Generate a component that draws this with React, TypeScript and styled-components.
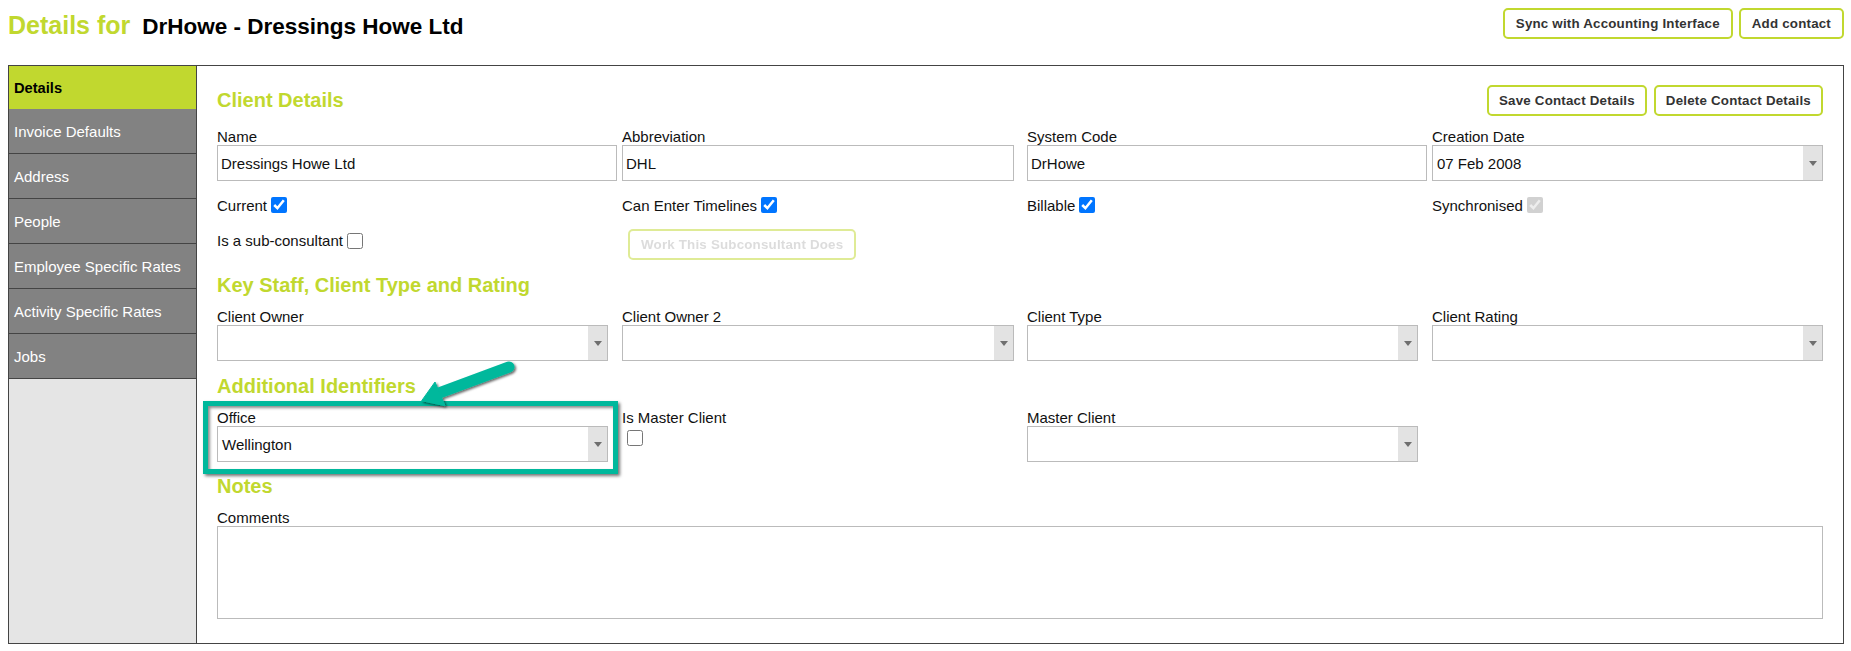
import React from "react";
import styled, { createGlobalStyle } from "styled-components";

const GlobalStyle = createGlobalStyle`
  html, body {
    margin: 0;
    padding: 0;
    background: #fff;
    font-family: "Liberation Sans", Arial, sans-serif;
    color: #111;
  }
`;

const LIME = "#c1d82f";
const TEAL = "#00b89c";

const Page = styled.div`
  width: 1851px;
  height: 651px;
  overflow: hidden;
  box-sizing: border-box;
  padding: 8px 7px 0 8px;
`;

const TopBar = styled.div`
  display: flex;
  justify-content: space-between;
  align-items: center;
  height: 31px;
  margin-bottom: 26px;
`;

const PageTitle = styled.h1`
  margin: 0;
  padding-top: 3px;
  font-size: 25px;
  font-weight: bold;
  color: ${LIME};
  display: flex;
  align-items: baseline;
  gap: 12px;

  span {
    color: #000;
    font-size: 22.5px;
  }
`;

const ButtonRow = styled.div<{ $gap: number }>`
  display: flex;
  gap: ${(p) => p.$gap}px;
`;

const ActionButton = styled.button<{ $disabled?: boolean; $compact?: boolean }>`
  height: 31px;
  box-sizing: border-box;
  padding: 0 ${(p) => (p.$compact ? 10 : 11)}px;
  background: #fff;
  border: 2px solid ${LIME};
  border-radius: 5px;
  font-family: "Liberation Sans", Arial, sans-serif;
  font-size: 13.33px;
  font-weight: bold;
  letter-spacing: 0.2px;
  color: #333;
  opacity: ${(p) => (p.$disabled ? 0.5 : 1)};
  ${(p) => p.$disabled && "color: #bbb;"}
`;

const Panel = styled.div`
  display: flex;
  box-sizing: border-box;
  height: 579px;
  border: 1px solid #444;
`;

const Sidebar = styled.nav`
  width: 187px;
  flex: none;
  background: #e5e5e5;
  border-right: 1px solid #444;
`;

const Tab = styled.div<{ $active?: boolean }>`
  box-sizing: border-box;
  height: ${(p) => (p.$active ? 43 : 45)}px;
  padding-left: 5px;
  display: flex;
  align-items: center;
  font-size: ${(p) => (p.$active ? 14.67 : 15)}px;
  color: ${(p) => (p.$active ? "#000" : "#fff")};
  font-weight: ${(p) => (p.$active ? "bold" : "normal")};
  background: ${(p) => (p.$active ? LIME : "#828282")};
  border-bottom: ${(p) => (p.$active ? "none" : "1px solid #444")};
`;

const Main = styled.main`
  flex: 1;
  min-width: 0;
  box-sizing: border-box;
  padding: 19px 20px 0;
`;

const HeadingRow = styled.div`
  display: flex;
  justify-content: space-between;
  align-items: center;
  height: 31px;
`;

const SectionTitle = styled.h2<{ $top?: number }>`
  margin: ${(p) => p.$top ?? 0}px 0 0;
  font-size: 20px;
  line-height: 23px;
  font-weight: bold;
  color: ${LIME};
`;

const FieldGrid = styled.div<{ $top?: number }>`
  display: grid;
  grid-template-columns: 405px 405px 405px 391px;
  margin-top: ${(p) => p.$top ?? 0}px;
`;

const Field = styled.div`
  position: relative;
  min-width: 0;
`;

const Label = styled.label`
  display: block;
  font-size: 15px;
  line-height: 16px;
`;

const NotesLabel = styled(Label)`
  margin-top: 12px;
`;

const TextBox = styled.div<{ $width: number }>`
  box-sizing: border-box;
  width: ${(p) => p.$width}px;
  height: 36px;
  border: 1px solid #bbb;
  padding-left: 3px;
  display: flex;
  align-items: center;
  font-size: 15px;
`;

const SelectBox = styled.div<{ $width?: number }>`
  box-sizing: border-box;
  width: ${(p) => p.$width ?? 391}px;
  height: 36px;
  border: 1px solid #bbb;
  display: flex;
  font-size: 15px;
`;

const SelectValue = styled.div`
  flex: 1;
  padding-left: 4px;
  display: flex;
  align-items: center;
`;

const SelectArrow = styled.div`
  width: 19px;
  background: #e3e3e3;
  display: flex;
  align-items: center;
  justify-content: center;

  &::before {
    content: "";
    border-left: 4.5px solid transparent;
    border-right: 4.5px solid transparent;
    border-top: 5px solid #6f6f6f;
  }
`;

const CheckRow = styled.div`
  display: flex;
  align-items: center;
  gap: 4px;
  height: 24px;
  font-size: 15px;
`;

const Check = styled.input.attrs({ type: "checkbox" })<{ $left?: number; $top?: number }>`
  width: 16px;
  height: 16px;
  margin: ${(p) => p.$top ?? 0}px 0 0 ${(p) => p.$left ?? 0}px;
  flex: none;
`;

const SubRow = styled.div`
  margin-top: 8px;
  height: 31px;
  display: flex;
  align-items: center;
`;

const SubButtonWrap = styled.div`
  padding-left: 6px;
  padding-top: 12px;
`;

const NotesBox = styled.div`
  box-sizing: border-box;
  height: 93px;
  border: 1px solid #bbb;
`;

const Highlight = styled.div`
  position: absolute;
  left: -14px;
  top: -9px;
  width: 415px;
  height: 73px;
  box-sizing: border-box;
  border: 5px solid ${TEAL};
  box-shadow: 2px 2px 3px rgba(0, 0, 0, 0.55), inset 2px 2px 3px rgba(0, 0, 0, 0.45);
  pointer-events: none;
`;

const ArrowMark = styled.svg`
  position: absolute;
  left: 200px;
  top: -55px;
  overflow: visible;
  pointer-events: none;
`;

const tabs = [
  "Details",
  "Invoice Defaults",
  "Address",
  "People",
  "Employee Specific Rates",
  "Activity Specific Rates",
  "Jobs",
];

export default function App() {
  return (
    <>
      <GlobalStyle />
      <Page>
        <TopBar>
          <PageTitle>
            Details for <span>DrHowe - Dressings Howe Ltd</span>
          </PageTitle>
          <ButtonRow $gap={6}>
            <ActionButton>Sync with Accounting Interface</ActionButton>
            <ActionButton>Add contact</ActionButton>
          </ButtonRow>
        </TopBar>
        <Panel>
          <Sidebar>
            {tabs.map((t, i) => (
              <Tab key={t} $active={i === 0}>
                {t}
              </Tab>
            ))}
          </Sidebar>
          <Main>
            <HeadingRow>
              <SectionTitle>Client Details</SectionTitle>
              <ButtonRow $gap={7}>
                <ActionButton $compact>Save Contact Details</ActionButton>
                <ActionButton $compact>Delete Contact Details</ActionButton>
              </ButtonRow>
            </HeadingRow>

            <FieldGrid $top={13}>
              <Field>
                <Label>Name</Label>
                <TextBox $width={400}>Dressings Howe Ltd</TextBox>
              </Field>
              <Field>
                <Label>Abbreviation</Label>
                <TextBox $width={392}>DHL</TextBox>
              </Field>
              <Field>
                <Label>System Code</Label>
                <TextBox $width={400}>DrHowe</TextBox>
              </Field>
              <Field>
                <Label>Creation Date</Label>
                <SelectBox>
                  <SelectValue>07 Feb 2008</SelectValue>
                  <SelectArrow />
                </SelectBox>
              </Field>
            </FieldGrid>

            <FieldGrid $top={12}>
              <CheckRow>
                Current <Check defaultChecked />
              </CheckRow>
              <CheckRow>
                Can Enter Timelines <Check defaultChecked />
              </CheckRow>
              <CheckRow>
                Billable <Check defaultChecked />
              </CheckRow>
              <CheckRow>
                Synchronised <Check defaultChecked disabled />
              </CheckRow>
            </FieldGrid>

            <FieldGrid>
              <SubRow>
                <CheckRow>
                  Is a sub-consultant <Check />
                </CheckRow>
              </SubRow>
              <SubButtonWrap>
                <ActionButton $disabled>Work This Subconsultant Does</ActionButton>
              </SubButtonWrap>
            </FieldGrid>

            <SectionTitle $top={14}>Key Staff, Client Type and Rating</SectionTitle>

            <FieldGrid $top={12}>
              <Field>
                <Label>Client Owner</Label>
                <SelectBox>
                  <SelectValue />
                  <SelectArrow />
                </SelectBox>
              </Field>
              <Field>
                <Label>Client Owner 2</Label>
                <SelectBox $width={392}>
                  <SelectValue />
                  <SelectArrow />
                </SelectBox>
              </Field>
              <Field>
                <Label>Client Type</Label>
                <SelectBox>
                  <SelectValue />
                  <SelectArrow />
                </SelectBox>
              </Field>
              <Field>
                <Label>Client Rating</Label>
                <SelectBox>
                  <SelectValue />
                  <SelectArrow />
                </SelectBox>
              </Field>
            </FieldGrid>

            <SectionTitle $top={14}>Additional Identifiers</SectionTitle>

            <FieldGrid $top={12}>
              <Field>
                <Label>Office</Label>
                <SelectBox>
                  <SelectValue>Wellington</SelectValue>
                  <SelectArrow />
                </SelectBox>
                <Highlight />
                <ArrowMark width="100" height="56" viewBox="0 0 100 56">
                  <defs>
                    <filter id="arrowShadow" x="-20%" y="-40%" width="140%" height="180%">
                      <feDropShadow dx="1.5" dy="1.5" stdDeviation="1.2" floodColor="#000" floodOpacity="0.6" />
                    </filter>
                  </defs>
                  <g filter="url(#arrowShadow)">
                    <path d="M22 38 L92 12" stroke={TEAL} strokeWidth="11" strokeLinecap="round" fill="none" />
                    <path d="M4.7 45.7 L18 27 L28 50.7 Z" fill={TEAL} stroke={TEAL} strokeWidth="1" strokeLinejoin="round" />
                  </g>
                </ArrowMark>
              </Field>
              <Field>
                <Label>Is Master Client</Label>
                <Check $left={5} $top={4} />
              </Field>
              <Field>
                <Label>Master Client</Label>
                <SelectBox>
                  <SelectValue />
                  <SelectArrow />
                </SelectBox>
              </Field>
            </FieldGrid>

            <SectionTitle $top={13}>Notes</SectionTitle>

            <NotesLabel>Comments</NotesLabel>
            <NotesBox />
          </Main>
        </Panel>
      </Page>
    </>
  );
}
